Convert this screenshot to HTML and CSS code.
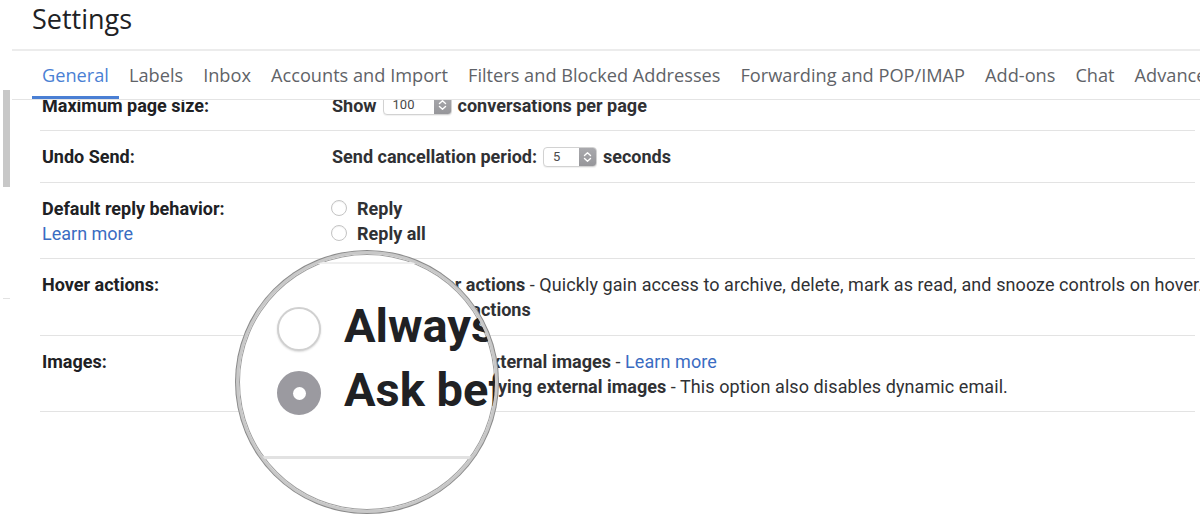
FILE: index.html
```html
<!DOCTYPE html>
<html lang="en">
<head>
<meta charset="utf-8">
<title>Settings</title>
<link rel="stylesheet" href="styles.css">
</head>
<body>
<div class="app">
  <h1 class="title">Settings</h1>
  <nav class="tabs">
    <a class="tab active">General</a>
    <a class="tab">Labels</a>
    <a class="tab">Inbox</a>
    <a class="tab">Accounts and Import</a>
    <a class="tab">Filters and Blocked Addresses</a>
    <a class="tab">Forwarding and POP/IMAP</a>
    <a class="tab">Add-ons</a>
    <a class="tab">Chat</a>
    <a class="tab">Advanced</a>
    <a class="tab">Offline</a>
  </nav>
  <div class="viewport">
    <div class="rows">
      <div class="row">
        <div class="label">Maximum page size:</div>
        <div class="value">
          <div class="line">
            <span class="b">Show</span>
            <span class="select sel-100"><span class="sel-text">100</span><span class="stepper"><svg width="9" height="12" viewBox="0 0 9 12"><path d="M1.5 4.5 L4.5 1.8 L7.5 4.5 M1.5 7.5 L4.5 10.2 L7.5 7.5" fill="none" stroke="#fff" stroke-width="1.4" stroke-linecap="round" stroke-linejoin="round"/></svg></span></span>
            <span class="b">conversations per page</span>
          </div>
        </div>
      </div>
      <div class="row">
        <div class="label">Undo Send:</div>
        <div class="value">
          <div class="line">
            <span class="b">Send cancellation period:</span>
            <span class="select sel-5"><span class="sel-text">5</span><span class="stepper"><svg width="9" height="12" viewBox="0 0 9 12"><path d="M1.5 4.5 L4.5 1.8 L7.5 4.5 M1.5 7.5 L4.5 10.2 L7.5 7.5" fill="none" stroke="#fff" stroke-width="1.4" stroke-linecap="round" stroke-linejoin="round"/></svg></span></span>
            <span class="b">seconds</span>
          </div>
        </div>
      </div>
      <div class="row">
        <div class="label">Default reply behavior:<br><a class="link">Learn more</a></div>
        <div class="value">
          <div class="opt"><span class="radio"></span><span class="b">Reply</span></div>
          <div class="opt"><span class="radio"></span><span class="b">Reply all</span></div>
        </div>
      </div>
      <div class="row">
        <div class="label">Hover actions:</div>
        <div class="value">
          <div class="opt"><span class="radio"></span><span class="desc"><span class="b">Enable hover actions</span> - Quickly gain access to archive, delete, mark as read, and snooze controls on hover.</span></div>
          <div class="opt"><span class="radio"></span><span class="b">Disable hover actions</span></div>
        </div>
      </div>
      <div class="row">
        <div class="label">Images:</div>
        <div class="value">
          <div class="opt"><span class="radio"></span><span class="desc"><span class="b">Always display external images</span> - <a class="link">Learn more</a></span></div>
          <div class="opt"><span class="radio"></span><span class="desc"><span class="b">Ask before displaying external images</span> - This option also disables dynamic email.</span></div>
        </div>
      </div>
    </div>
  </div>
  <div class="scroll-thumb"></div>
  <div class="scroll-mark"></div>
  <div class="magnifier">
    <div class="mag-rule top"></div>
    <div class="mag-lines">
      <div class="mag-opt"><span class="mag-radio"></span><span>Always display</span></div>
      <div class="mag-opt"><span class="mag-radio on"></span><span>Ask before</span></div>
    </div>
    <div class="mag-rule"></div>
  </div>
</div>
</body>
</html>
```

FILE: styles.css
```css
* { box-sizing: border-box; }
html, body { margin: 0; padding: 0; background: #fff; }
body {
  width: 1200px;
  height: 521px;
  overflow: hidden;
  font-family: Roboto, "Liberation Sans", Arial, sans-serif;
  color: #202124;
}
.app {
  position: relative;
  width: 1200px;
  height: 521px;
  overflow: hidden;
  display: flex;
  flex-direction: column;
}
.title {
  margin: 0;
  height: 49px;
  padding-left: 32px;
  font-family: "Open Sans", Roboto, sans-serif;
  font-weight: 400;
  font-size: 27px;
  line-height: 38px;
  color: #202124;
  flex: none;
}
.tabs {
  flex: none;
  margin-left: 12px;
  height: 51px;
  border-top: 2px solid #ececec;
  border-bottom: 1px solid #e4e4e4;
  padding-left: 20px;
  display: flex;
  white-space: nowrap;
  overflow: hidden;
  font-family: "Open Sans", Roboto, sans-serif;
  font-size: 18.2px;
}
.tab {
  padding: 1px 10px 0;
  line-height: 47px;
  color: #5f6368;
  flex: none;
}
.tab.active {
  color: #4a7fd4;
  box-shadow: inset 0 -3px 0 #4a7fd4;
}
.viewport {
  flex: 1;
  overflow: hidden;
}
.rows {
  margin: -20.5px 5px 0 40px;
}
.row {
  display: grid;
  grid-template-columns: 290px 1fr;
  padding: 13px 0 12.5px 2px;
  border-bottom: 1px solid #e3e3e3;
  font-size: 18px;
  line-height: 25px;
}
.label { font-weight: 700; }
.label .link { font-weight: 400; }
.b { font-weight: 700; letter-spacing: 0; }
.link { color: #3a6cc2; }
.value { white-space: nowrap; color: #303134; }
.desc { letter-spacing: 0.08px; }
.line {
  display: flex;
  align-items: center;
  gap: 6px;
  height: 25px;
}
.select {
  display: inline-flex;
  height: 20px;
  border: 1px solid #d2d2d2;
  border-radius: 4px;
  background: #fff;
  box-shadow: 0 1px 1px rgba(0,0,0,0.06);
  overflow: hidden;
}
.sel-100 { width: 69px; }
.sel-5 { width: 54px; }
.sel-text {
  flex: 1;
  font-size: 13px;
  line-height: 18px;
  padding-left: 9px;
  color: #4a4a4a;
}
.stepper {
  width: 17px;
  background: linear-gradient(#a9a9ad, #96969a);
  display: flex;
  align-items: center;
  justify-content: center;
}
.opt {
  display: flex;
  align-items: center;
  gap: 10px;
  height: 25px;
  margin-left: -1px;
}
.radio {
  flex: none;
  width: 16px;
  height: 16px;
  border-radius: 50%;
  border: 1px solid #c4c4c4;
  background: #fff;
  box-shadow: inset 0 1px 1px rgba(0,0,0,0.06);
}
.scroll-thumb {
  position: absolute;
  left: 3px;
  top: 90px;
  width: 7px;
  height: 97px;
  background: #c8c8c8;
}
.scroll-mark {
  position: absolute;
  left: 3px;
  top: 298px;
  width: 7px;
  height: 1px;
  background: #e2e2e2;
}
.magnifier {
  position: absolute;
  left: 236px;
  top: 251px;
  width: 262px;
  height: 262px;
  border-radius: 50%;
  border: 3px solid #c8c8c8;
  box-shadow: 0 0 0 1px #8a8a8a, inset 0 0 0 1px #a0a0a0;
  background: #fff;
  overflow: hidden;
}
.mag-rule {
  height: 3px;
  background: #e2e2e2;
  margin-top: 34px;
}
.mag-rule.top {
  height: 2px;
  background: #efefef;
  margin: 8px 80px 0 60px;
}
.mag-lines {
  margin-top: 30px;
  padding-left: 38px;
  white-space: nowrap;
}
.mag-opt {
  display: flex;
  align-items: center;
  gap: 23px;
  height: 64px;
  font-size: 47px;
  line-height: 64px;
  font-weight: 700;
  color: #202124;
}
.mag-radio {
  flex: none;
  width: 44px;
  height: 44px;
  margin-top: 6px;
  border-radius: 50%;
  border: 2px solid #d0d0d0;
  background: #fff;
  box-shadow: 0 1px 2px rgba(0,0,0,0.15);
  display: flex;
  align-items: center;
  justify-content: center;
}
.mag-radio.on {
  border-color: #9b9aa0;
  background: #9b9aa0;
  box-shadow: none;
}
.mag-radio.on::after {
  content: "";
  width: 13px;
  height: 13px;
  border-radius: 50%;
  background: #fff;
}
```
